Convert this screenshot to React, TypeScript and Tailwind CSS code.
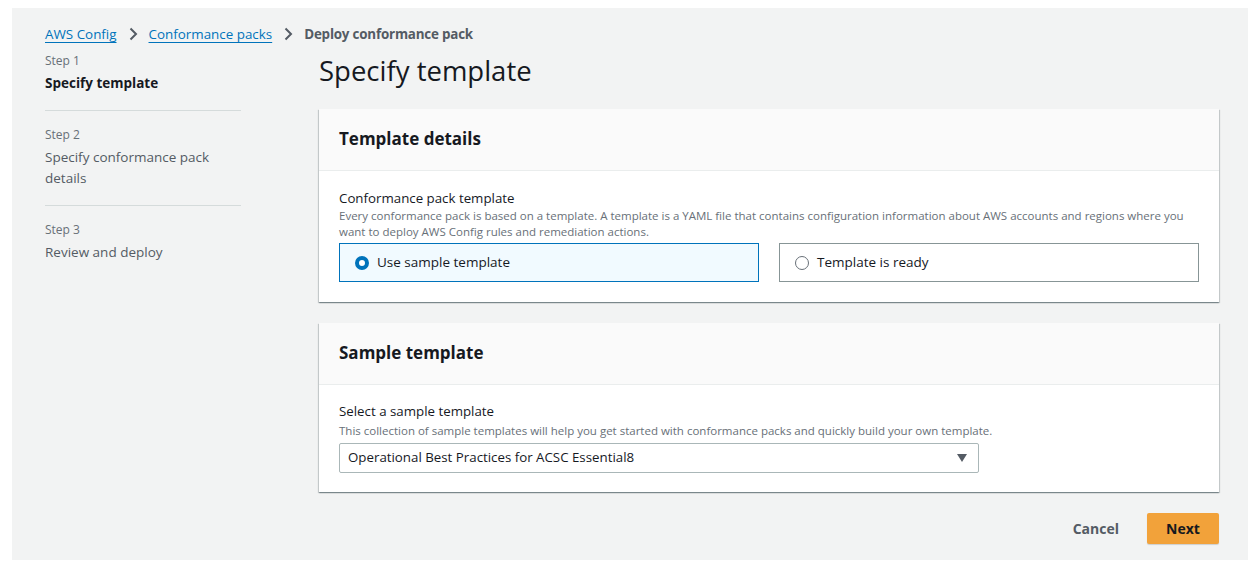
import React, { useState } from "react";

const steps = [
    { step: "Step 1", title: "Specify template", active: true },
    { step: "Step 2", title: "Specify conformance pack details", active: false },
    { step: "Step 3", title: "Review and deploy", active: false },
];

const cardShadow =
    "shadow-[0_1px_1px_0_rgba(0,28,36,0.3),1px_1px_1px_0_rgba(0,28,36,0.15),-1px_1px_1px_0_rgba(0,28,36,0.15)]";

const Chevron = () => (
    <svg width="16" height="16" viewBox="0 0 16 16" className="mx-[8px] text-[#545b64]">
        <path d="M5.5 2.5 11 8l-5.5 5.5" fill="none" stroke="currentColor" strokeWidth="2" />
    </svg>
);

const Radio = ({ checked }: { checked: boolean }) => (
    <span
        className={`inline-block w-[14px] h-[14px] rounded-full bg-white ${checked ? "border-[4px] border-[#0073bb]" : "border border-[#687078]"}`}
    />
);

const App: React.FC = () => {
    const [choice, setChoice] = useState<"sample" | "ready">("sample");

    return (
        <div className="w-[1256px] h-[563px] bg-white pt-[8px] pl-[12px]" style={{ fontFamily: '"Open Sans", sans-serif' }}>
            <div className="w-[1236px] h-[552px] bg-[#f2f3f3] pl-[33px] pt-[16px]">
                {/* Breadcrumb */}
                <div className="flex items-center h-[20px] text-[13.4px] text-[#545b64]">
                    <a className="text-[#0073bb] underline underline-offset-[3px] decoration-[#0073bb]">AWS Config</a>
                    <Chevron />
                    <a className="text-[#0073bb] underline underline-offset-[3px] decoration-[#0073bb]">Conformance packs</a>
                    <Chevron />
                    <span className="font-bold tracking-[-0.2px]">Deploy conformance pack</span>
                </div>

                <div className="flex mt-[6px]">
                    {/* Wizard steps */}
                    <nav className="w-[196px] shrink-0">
                        {steps.map((s, i) => (
                            <div key={s.step} className={`${i > 0 ? "border-t border-[#d5dbdb] pt-[14px]" : "pt-[1px]"} pb-[16px]`}>
                                <div className="text-[12px] leading-[20px] text-[#687078]">{s.step}</div>
                                <div className={`mt-[2px] text-[13.5px] leading-[21px] pr-[20px] ${s.active ? "font-bold text-[#16191f]" : "text-[#545b64]"}`}>
                                    {s.title}
                                </div>
                            </div>
                        ))}
                    </nav>

                    {/* Main */}
                    <main className="ml-[78px] w-[900px]">
                        <h1 className="text-[27.5px] leading-[36px] text-[#16191f] pt-[3px] pb-[20px]">Specify template</h1>

                        <section className={`bg-white ${cardShadow}`}>
                            <div className="bg-[#fafafa] border-b border-[#eaeded] h-[62px] px-[20px] flex items-center">
                                <h2 className="text-[17px] font-bold text-[#16191f] -mt-[1px]">Template details</h2>
                            </div>
                            <div className="px-[20px] pt-[17px] pb-[20px]">
                                <div className="text-[13.3px] leading-[20px] text-[#16191f]">Conformance pack template</div>
                                <div className="text-[11.5px] leading-[16px] text-[#687078]">
                                    Every conformance pack is based on a template. A template is a YAML file that contains configuration information about AWS accounts and regions where you want to deploy AWS Config rules and remediation actions.
                                </div>
                                <div className="grid grid-cols-2 gap-[20px] mt-[3px]">
                                    <button
                                        onClick={() => setChoice("sample")}
                                        className={`h-[39px] flex items-center gap-[8px] pl-[15px] border text-left text-[13.5px] text-[#16191f] ${choice === "sample" ? "bg-[#f1faff] border-[#0073bb]" : "bg-white border-[#879596]"}`}
                                    >
                                        <Radio checked={choice === "sample"} />
                                        Use sample template
                                    </button>
                                    <button
                                        onClick={() => setChoice("ready")}
                                        className={`h-[39px] flex items-center gap-[8px] pl-[15px] border text-left text-[13.5px] text-[#16191f] ${choice === "ready" ? "bg-[#f1faff] border-[#0073bb]" : "bg-white border-[#879596]"}`}
                                    >
                                        <Radio checked={choice === "ready"} />
                                        Template is ready
                                    </button>
                                </div>
                            </div>
                        </section>

                        <section className={`mt-[21px] bg-white ${cardShadow}`}>
                            <div className="bg-[#fafafa] border-b border-[#eaeded] h-[62px] px-[20px] flex items-center">
                                <h2 className="text-[17px] font-bold text-[#16191f] -mt-[1px]">Sample template</h2>
                            </div>
                            <div className="px-[20px] pt-[16px] pb-[19px]">
                                <div className="text-[13.3px] leading-[20px] text-[#16191f]">Select a sample template</div>
                                <div className="mt-[2px] text-[11.5px] leading-[16px] text-[#687078]">
                                    This collection of sample templates will help you get started with conformance packs and quickly build your own template.
                                </div>
                                <div className="mt-[4px] w-[640px] h-[30px] border border-[#aab7b8] rounded-[2px] bg-white flex items-center justify-between pl-[8px] pr-[10px] text-[13.3px] text-[#16191f]">
                                    <span>Operational Best Practices for ACSC Essential8</span>
                                    <svg width="12" height="10" viewBox="0 0 12 10">
                                        <path d="M1 1h10L6 9z" fill="#545b64" />
                                    </svg>
                                </div>
                            </div>
                        </section>

                        <div className="flex justify-end items-center mt-[21px]">
                            <button className="text-[14px] font-bold text-[#545b64] px-[20px] h-[31px] mr-[8px]">Cancel</button>
                            <button className="text-[14px] font-bold text-[#16191f] bg-[#f2a23a] rounded-[2px] w-[72px] h-[31px] shadow-[0_1px_1px_0_rgba(0,0,0,0.15)]">Next</button>
                        </div>
                    </main>
                </div>
            </div>
        </div>
    );
};

export default App;
